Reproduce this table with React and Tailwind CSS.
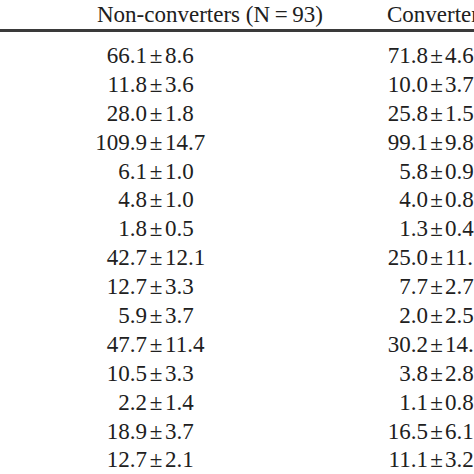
const rows = [
  ['66.1', '8.6', '71.8', '4.6'],
  ['11.8', '3.6', '10.0', '3.7'],
  ['28.0', '1.8', '25.8', '1.5'],
  ['109.9', '14.7', '99.1', '9.8'],
  ['6.1', '1.0', '5.8', '0.9'],
  ['4.8', '1.0', '4.0', '0.8'],
  ['1.8', '0.5', '1.3', '0.4'],
  ['42.7', '12.1', '25.0', '11.1'],
  ['12.7', '3.3', '7.7', '2.7'],
  ['5.9', '3.7', '2.0', '2.5'],
  ['47.7', '11.4', '30.2', '14.1'],
  ['10.5', '3.3', '3.8', '2.8'],
  ['2.2', '1.4', '1.1', '0.8'],
  ['18.9', '3.7', '16.5', '6.1'],
  ['12.7', '2.1', '11.1', '3.2'],
];

export default function App() {
  return (
    <div
      className="w-[474px] h-[474px] overflow-hidden bg-white text-[#202020]"
      style={{ fontFamily: '"Liberation Serif", "Times New Roman", serif' }}
    >
      <div className="w-[600px]">
        <div className="flex h-[29px] items-center text-[23px] leading-none">
          <div className="w-[97px]" />
          <div className="w-[290px] whitespace-nowrap">Non-converters (N&#8201;=&#8201;93)</div>
          <div className="whitespace-nowrap">Converters</div>
        </div>
        <div className="h-[3px] bg-[#3a3a3a]" />
        <div className="pt-[9px]">
          {rows.map((r, i) => (
            <div
              key={i}
              className="grid h-[28.9px] grid-cols-[147px_18px_130px_133px_17px_auto] items-center text-[23px] leading-none"
            >
              <span className="text-right">{r[0]}</span>
              <span className="text-center">±</span>
              <span>{r[1]}</span>
              <span className="text-right">{r[2]}</span>
              <span className="text-center">±</span>
              <span className="whitespace-nowrap">{r[3]}</span>
            </div>
          ))}
        </div>
      </div>
    </div>
  );
}
